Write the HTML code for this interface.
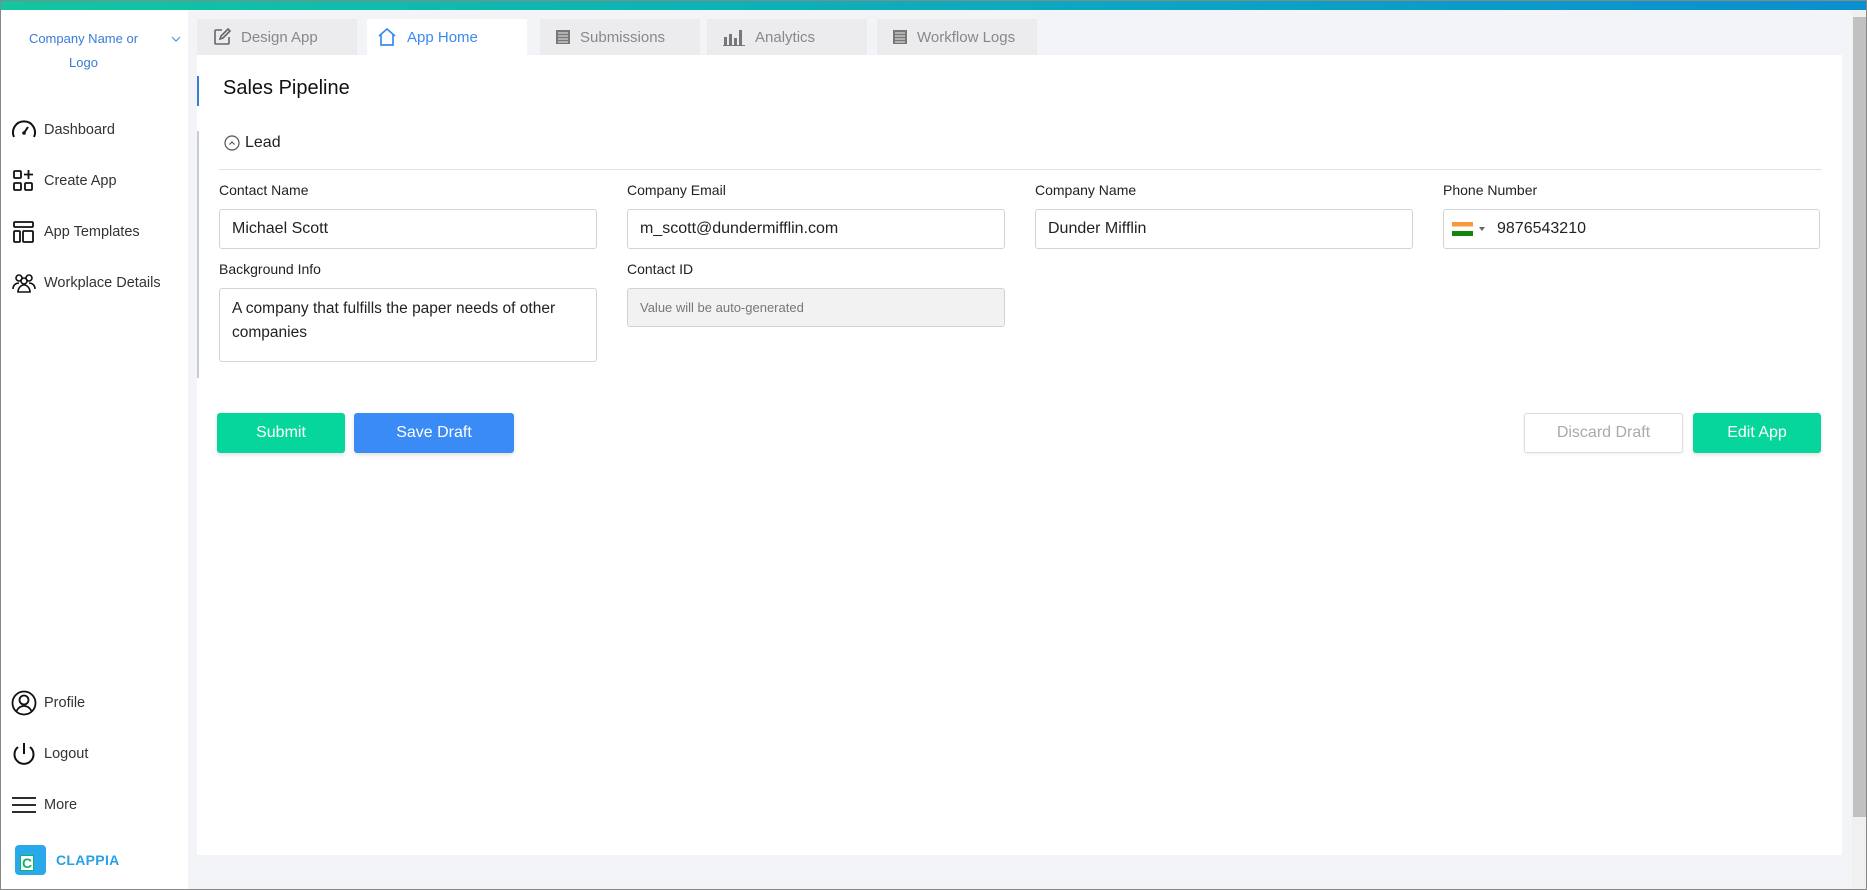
<!DOCTYPE html>
<html><head><meta charset="utf-8"><style>
*{box-sizing:border-box;margin:0;padding:0}
body{width:1867px;height:890px;overflow:hidden;background:#f3f4f7;font-family:"Liberation Sans",sans-serif;position:relative;}
.abs{position:absolute}
.frame{left:0;top:0;width:1867px;height:890px;border:1px solid #888;pointer-events:none;z-index:9}
.top{left:0;top:0;width:1867px;height:10px;background:linear-gradient(90deg,#12c6a0,#0aa7c2 60%,#0a8fd0)}
.side{left:1px;top:10px;width:187px;height:879px;background:#fff}
.nav{position:absolute;left:10px;font-size:14.5px;color:#333;display:flex;align-items:center;height:30px}
.nav svg{width:26px;height:26px;margin-right:7px}
.tab{top:19px;height:36px;width:160px;background:#ececee;color:#888;font-size:15px;display:flex;align-items:center;padding-left:16px}
.tab svg{margin-right:10px}
.panel{left:197px;top:55px;width:1645px;height:800px;background:#fff}
.lbl{font-size:14px;color:#222}
.inp{border:1px solid #d3d3d3;border-radius:3px;height:40px;width:378px;font-size:16px;color:#222;padding-left:12px;display:flex;align-items:center;background:#fff}
.btn{height:40px;border-radius:3px;color:#fff;font-size:16px;display:flex;align-items:center;justify-content:center;box-shadow:0 2px 4px rgba(0,0,0,.12)}
</style></head><body>
<div class="abs top"></div>
<div class="abs side">
  <div class="abs" style="left:0;top:17px;width:165px;text-align:center;color:#3a7bd5;font-size:13px;line-height:24px">Company Name or<br>Logo</div>
  <svg class="abs" style="left:170px;top:25px" width="10" height="8" viewBox="0 0 10 8"><path d="M1 2l4 4 4-4" fill="none" stroke="#5b8de0" stroke-width="1.2"/></svg>
  <div class="nav" style="top:105px"><svg viewBox="0 0 26 26"><path d="M3 20A11 11 0 1 1 23 20" fill="none" stroke="#111" stroke-width="2"/><path d="M13 16l4-6" stroke="#111" stroke-width="2"/><circle cx="13" cy="16" r="1.8" fill="#111"/></svg>Dashboard</div>
  <div class="nav" style="top:156px"><svg viewBox="0 0 26 26" fill="none" stroke="#111" stroke-width="1.8"><rect x="3" y="3" width="7" height="7" rx="1"/><rect x="3" y="15" width="7" height="7" rx="1"/><rect x="14" y="15" width="7" height="7" rx="1"/><path d="M17.5 2v9M13 6.5h9"/></svg>Create App</div>
  <div class="nav" style="top:207px"><svg viewBox="0 0 26 26" fill="none" stroke="#111" stroke-width="1.8"><rect x="3" y="3" width="19" height="5" rx="1"/><rect x="3" y="12" width="6" height="11" rx="1"/><rect x="12" y="12" width="10" height="11" rx="1"/></svg>App Templates</div>
  <div class="nav" style="top:258px"><svg viewBox="0 0 26 26" fill="none" stroke="#111" stroke-width="1.6"><circle cx="8" cy="8" r="3"/><circle cx="18" cy="8" r="3"/><circle cx="13" cy="11" r="3"/><path d="M2 19c0-4 3-6 6-6M24 19c0-4-3-6-6-6M7 22c0-4 3-7 6-7s6 3 6 7z"/></svg>Workplace Details</div>
  <div class="nav" style="top:678px"><svg viewBox="0 0 26 26" fill="none" stroke="#111" stroke-width="1.8"><circle cx="13" cy="13" r="11.5"/><circle cx="13" cy="10" r="4.5"/><path d="M5.5 21c2-4 5-5 7.5-5s5.5 1 7.5 5"/></svg>Profile</div>
  <div class="nav" style="top:729px"><svg viewBox="0 0 26 26" fill="none" stroke="#111" stroke-width="2"><path d="M13 2v11"/><path d="M7 6A9.5 9.5 0 1 0 19 6"/></svg>Logout</div>
  <div class="nav" style="top:780px"><svg viewBox="0 0 26 26" stroke="#111" stroke-width="1.8"><path d="M1 6h24M1 13h24M1 20h24"/></svg>More</div>
  <div class="abs" style="left:14px;top:835px;width:31px;height:30px;background:#2aa9ea;border-radius:4px"></div>
  <div class="abs" style="left:19px;top:845px;width:14px;height:16px;background:#fff;border:1px solid #0fb26b;color:#0fb26b;font-weight:bold;font-size:14px;line-height:14px;text-align:center">C</div>
  <div class="abs" style="left:55px;top:842px;font-size:14px;font-weight:bold;color:#2aa0e4;letter-spacing:.3px">CLAPPIA</div>
</div>

<div class="abs tab" style="left:197px"><svg width="18" height="18" viewBox="0 0 18 18" fill="none" stroke="#666" stroke-width="1.6"><path d="M9 2H3a1 1 0 0 0-1 1v12a1 1 0 0 0 1 1h12a1 1 0 0 0 1-1V9"/><path d="M7 11l1-3 7-7 2 2-7 7z"/></svg>Design App</div>
<div class="abs tab" style="left:367px;background:#fff;color:#3a8bf0;padding-left:10px"><svg width="20" height="20" viewBox="0 0 20 20" fill="none" stroke="#3a8bf0" stroke-width="1.7"><path d="M2 9l8-7 8 7M4 7v11h12V7"/></svg>App Home</div>
<div class="abs tab" style="left:540px"><svg width="14" height="14" viewBox="0 0 14 14" fill="#777"><rect x="0" y="0" width="14" height="14"/><path d="M2 3h10M2 6h10M2 9h10M2 12h10" stroke="#ececee"/></svg>Submissions</div>
<div class="abs tab" style="left:707px"><svg width="22" height="18" viewBox="0 0 22 18" fill="#777"><rect x="1" y="9" width="3" height="8"/><rect x="6" y="6" width="3" height="11"/><rect x="11" y="10" width="3" height="7"/><rect x="16" y="2" width="3" height="15"/><rect x="0" y="17" width="22" height="1"/></svg>Analytics</div>
<div class="abs tab" style="left:877px"><svg width="14" height="14" viewBox="0 0 14 14" fill="#777"><rect x="0" y="0" width="14" height="14"/><path d="M2 3h10M2 6h10M2 9h10M2 12h10" stroke="#ececee"/></svg>Workflow Logs</div>

<div class="abs panel"></div>
<div class="abs" style="left:197px;top:76px;width:2px;height:30px;background:#3a7bd5"></div>
<div class="abs" style="left:223px;top:77px;font-size:20px;color:#111">Sales Pipeline</div>
<div class="abs" style="left:197px;top:131px;width:2px;height:247px;background:#c7ccd3"></div>
<svg class="abs" style="left:224px;top:135px" width="16" height="16" viewBox="0 0 16 16" fill="none" stroke="#555" stroke-width="1.2"><circle cx="8" cy="8" r="7"/><path d="M5.5 9.5L8 7l2.5 2.5"/></svg>
<div class="abs" style="left:245px;top:134px;font-size:16px;color:#222">Lead</div>
<div class="abs" style="left:219px;top:169px;width:1603px;height:1px;background:#e2e2e2"></div>

<div class="abs lbl" style="left:219px;top:182px">Contact Name</div>
<div class="abs lbl" style="left:627px;top:182px">Company Email</div>
<div class="abs lbl" style="left:1035px;top:182px">Company Name</div>
<div class="abs lbl" style="left:1443px;top:182px">Phone Number</div>
<div class="abs inp" style="left:219px;top:209px">Michael Scott</div>
<div class="abs inp" style="left:627px;top:209px">m_scott@dundermifflin.com</div>
<div class="abs inp" style="left:1035px;top:209px">Dunder Mifflin</div>
<div class="abs inp" style="left:1443px;top:209px;width:377px;padding-left:8px">
  <div style="width:21px;height:14px;background:linear-gradient(#f7993a 0 33%,#fff 33% 66%,#138808 66%);margin-right:6px"></div>
  <div style="width:0;height:0;border-left:3px solid transparent;border-right:3px solid transparent;border-top:4px solid #666;margin-right:12px"></div>9876543210</div>
<div class="abs lbl" style="left:219px;top:261px">Background Info</div>
<div class="abs lbl" style="left:627px;top:261px">Contact ID</div>
<div class="abs inp" style="left:219px;top:288px;height:74px;align-items:flex-start;padding-top:8px;line-height:24px;font-size:15.5px">A company that fulfills the paper needs of other companies</div>
<div class="abs inp" style="left:627px;top:288px;height:39px;background:#f2f2f2;color:#777;font-size:13px">Value will be auto-generated</div>

<div class="abs btn" style="left:217px;top:413px;width:128px;background:#07d69c">Submit</div>
<div class="abs btn" style="left:354px;top:413px;width:160px;background:#3b8bf6">Save Draft</div>
<div class="abs btn" style="left:1524px;top:413px;width:159px;background:#fff;border:1px solid #ddd;color:#aaa;box-shadow:0 1px 3px rgba(0,0,0,.08)">Discard Draft</div>
<div class="abs btn" style="left:1693px;top:413px;width:128px;background:#07d69c">Edit App</div>

<div class="abs" style="left:1852px;top:10px;width:15px;height:880px;background:#f0f0f0"></div>
<div class="abs" style="left:1853px;top:17px;width:13px;height:800px;background:#c1c1c1"></div>
<div class="abs frame"></div>
</body></html>
